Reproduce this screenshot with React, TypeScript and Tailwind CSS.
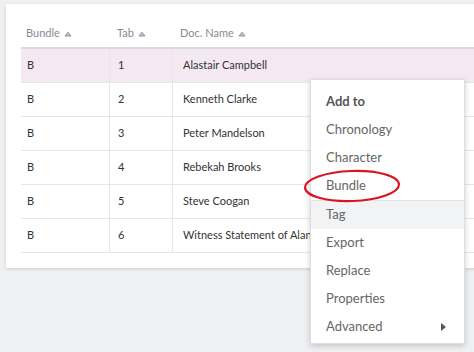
const rows = [
  { bundle: "B", tab: "1", name: "Alastair Campbell", selected: true },
  { bundle: "B", tab: "2", name: "Kenneth Clarke" },
  { bundle: "B", tab: "3", name: "Peter Mandelson" },
  { bundle: "B", tab: "4", name: "Rebekah Brooks" },
  { bundle: "B", tab: "5", name: "Steve Coogan" },
  { bundle: "B", tab: "6", name: "Witness Statement of Alan Smith" },
];

const menuItems = ["Chronology", "Character", "Bundle"];
const moreItems = ["Tag", "Export", "Replace", "Properties"];

function SortIcon() {
  return (
    <svg width="8" height="6" viewBox="0 0 8 6" className="ml-[4px] inline-block">
      <path d="M1 5 L4 1.2 L7 5 Z" fill="#c4c7ce" stroke="#8d929c" strokeWidth="1" strokeLinejoin="round" />
    </svg>
  );
}

export default function App() {
  return (
    <div
      className="relative h-[352px] w-[474px] overflow-hidden bg-[#eef0f2] pl-[6px] pt-[4px]"
      style={{ fontFamily: "Lato, 'Open Sans', sans-serif" }}
    >
      {/* Card */}
      <div className="w-[480px] bg-white pb-[15px] pl-[15px] pt-[16px] shadow-[0_1px_3px_rgba(0,0,0,0.15)]">
        <div className="flex h-[29px] items-center border-b-2 border-[#d9d9de] text-[11px] text-[#868b95]">
          <div className="flex w-[89px] items-center pl-[5px]">
            Bundle
            <SortIcon />
          </div>
          <div className="flex w-[63px] items-center pl-[7px]">
            Tab
            <SortIcon />
          </div>
          <div className="flex flex-1 items-center pl-[7px]">
            Doc. Name
            <SortIcon />
          </div>
        </div>
        {rows.map((r) => (
          <div
            key={r.tab}
            className={`flex h-[34px] border-b border-[#e6e6ea] text-[11px] text-[#333] ${
              r.selected ? "bg-[#f4e9f2]" : ""
            }`}
          >
            <div className="flex w-[89px] items-center border-r border-[#e6e6ea] pl-[6px]">{r.bundle}</div>
            <div className="flex w-[63px] items-center border-r border-[#e6e6ea] pl-[8px]">{r.tab}</div>
            <div className="flex flex-1 items-center pl-[10px]">
              <span className="max-w-[127px] overflow-hidden whitespace-nowrap">{r.name}</span>
            </div>
          </div>
        ))}
      </div>

      {/* Context menu */}
      <div className="absolute left-[310px] top-[79px] w-[155px] border border-[#dcdde0] bg-white pb-[2px] pt-[8px] text-[13px] text-[#666] shadow-[0_2px_6px_rgba(0,0,0,0.18)]">
        <div className="flex h-[28px] items-center pl-[15px] font-bold text-[#555]">Add to</div>
        {menuItems.map((m) => (
          <div key={m} className="flex h-[28px] items-center pl-[15px]">
            {m}
          </div>
        ))}
        <div className="h-px bg-[#e2e3e6]" />
        {moreItems.map((m) => (
          <div
            key={m}
            className={`flex h-[28px] items-center pl-[15px] ${m === "Tag" ? "bg-[#f2f3f5]" : ""}`}
          >
            {m}
          </div>
        ))}
        <div className="flex h-[28px] items-center justify-between pl-[15px] pr-[18px]">
          Advanced
          <svg width="5" height="8" viewBox="0 0 5 8">
            <path d="M0 0 L5 4 L0 8 Z" fill="#555" />
          </svg>
        </div>
      </div>

      {/* Red annotation ellipse */}
      <svg className="pointer-events-none absolute left-[300px] top-[166px]" width="104" height="40" viewBox="0 0 104 40">
        <ellipse cx="52" cy="20" rx="47" ry="15" fill="none" stroke="#d9141e" strokeWidth="2.2" transform="rotate(-2 52 20)" />
      </svg>
    </div>
  );
}
